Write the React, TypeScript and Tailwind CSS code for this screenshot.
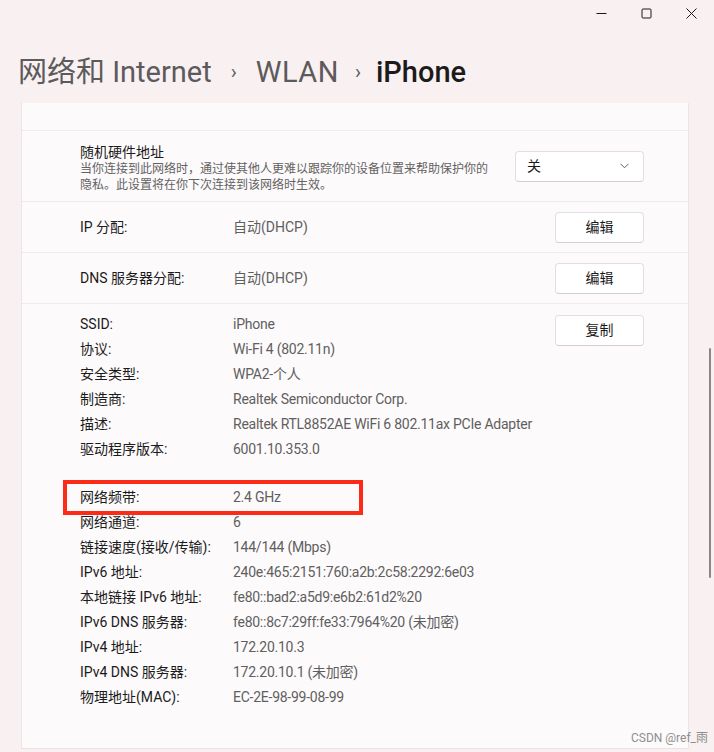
import React from "react";

const font = { fontFamily: 'Roboto, "Noto Sans CJK SC", sans-serif' };

type Info = { label: string; value: string };

const wifiInfo: Info[] = [
  { label: "SSID:", value: "iPhone" },
  { label: "协议:", value: "Wi-Fi 4 (802.11n)" },
  { label: "安全类型:", value: "WPA2-个人" },
  { label: "制造商:", value: "Realtek Semiconductor Corp." },
  { label: "描述:", value: "Realtek RTL8852AE WiFi 6 802.11ax PCIe Adapter" },
  { label: "驱动程序版本:", value: "6001.10.353.0" },
];

const netInfo: Info[] = [
  { label: "网络频带:", value: "2.4 GHz" },
  { label: "网络通道:", value: "6" },
  { label: "链接速度(接收/传输):", value: "144/144 (Mbps)" },
  { label: "IPv6 地址:", value: "240e:465:2151:760:a2b:2c58:2292:6e03" },
  { label: "本地链接 IPv6 地址:", value: "fe80::bad2:a5d9:e6b2:61d2%20" },
  { label: "IPv6 DNS 服务器:", value: "fe80::8c7:29ff:fe33:7964%20 (未加密)" },
  { label: "IPv4 地址:", value: "172.20.10.3" },
  { label: "IPv4 DNS 服务器:", value: "172.20.10.1 (未加密)" },
  { label: "物理地址(MAC):", value: "EC-2E-98-99-08-99" },
];

const Button = ({ text }: { text: string }) => (
  <button className="w-[89px] h-[31px] rounded-[4px] bg-white border border-[#e3dfe0] border-b-[#d4cfd0] text-[14px] text-[#1b1b1b] shrink-0">
    {text}
  </button>
);

const InfoRow = ({ item, marked }: { item: Info; marked?: boolean }) => (
  <div className="relative flex h-[25px] items-center text-[14px]">
    <span className="w-[153px] text-[#1b1b1b] whitespace-nowrap">{item.label}</span>
    <span className="text-[#5f5f5f] whitespace-nowrap tracking-[-0.25px]">{item.value}</span>
    {marked && (
      <div className="absolute left-[-17px] top-[-5px] w-[300px] h-[35px] border-[4px] border-[#fb2b17]" />
    )}
  </div>
);

const App = (): JSX.Element => {
  return (
    <div
      className="relative w-[714px] h-[752px] overflow-hidden bg-[#f9f0f1] flex flex-col"
      style={font}
    >
      {/* title bar */}
      <div className="flex justify-end items-center h-[26px] pr-[17px] gap-[34px] text-[#1b1b1b]">
        <svg width="11" height="11" viewBox="0 0 11 11">
          <path d="M0.5 5.5h10" stroke="#1b1b1b" strokeWidth="1" />
        </svg>
        <svg width="11" height="11" viewBox="0 0 11 11">
          <rect x="1" y="1" width="9" height="9" rx="1" fill="none" stroke="#1b1b1b" strokeWidth="1" />
        </svg>
        <svg width="11" height="11" viewBox="0 0 11 11">
          <path d="M0.5 0.5l10 10M10.5 0.5l-10 10" stroke="#1b1b1b" strokeWidth="1" />
        </svg>
      </div>

      {/* breadcrumb */}
      <div className="flex items-center h-[40px] mt-[26px] pl-[18px] text-[29px] leading-none whitespace-nowrap">
        <span className="text-[#5c5a5b]">网络和 Internet</span>
        <span className="text-[#5c5a5b] text-[20px] mx-[19px]">›</span>
        <span className="text-[#5c5a5b] tracking-[0.5px]">WLAN</span>
        <span className="text-[#5c5a5b] text-[20px] ml-[16px] mr-[15px]">›</span>
        <span className="text-[#1b1b1b] font-medium">iPhone</span>
      </div>

      {/* settings card */}
      <div className="ml-[21px] mt-[11px] w-[668px] bg-[#fdfafb] border-x border-[#ece4e6] flex flex-col">
        <div className="h-[28px] border-b border-[#f3e9eb]" />

        <div className="flex items-center h-[71px] pl-[58px] pr-[44px] border-b border-[#f3e9eb]">
          <div className="flex-1 pt-[4px]">
            <div className="text-[14px] text-[#1b1b1b] leading-[18px]">随机硬件地址</div>
            <div className="text-[12px] text-[#626262] leading-[16px] w-[410px]">
              当你连接到此网络时，通过使其他人更难以跟踪你的设备位置来帮助保护你的隐私。此设置将在你下次连接到该网络时生效。
            </div>
          </div>
          <div className="flex items-center justify-between w-[129px] h-[31px] rounded-[4px] bg-white border border-[#e3dfe0] border-b-[#d4cfd0] pl-[11px] pr-[14px] shrink-0">
            <span className="text-[14px] text-[#1b1b1b]">关</span>
            <svg width="9" height="6" viewBox="0 0 9 6">
              <path d="M0.5 0.8L4.5 4.8L8.5 0.8" fill="none" stroke="#5f5f5f" strokeWidth="1" />
            </svg>
          </div>
        </div>

        <div className="flex items-center h-[51px] pl-[58px] pr-[44px] border-b border-[#f3e9eb] text-[14px]">
          <span className="w-[153px] text-[#1b1b1b]">IP 分配:</span>
          <span className="flex-1 text-[#5f5f5f]">自动(DHCP)</span>
          <Button text="编辑" />
        </div>

        <div className="flex items-center h-[51px] pl-[58px] pr-[44px] border-b border-[#f3e9eb] text-[14px]">
          <span className="w-[153px] text-[#1b1b1b]">DNS 服务器分配:</span>
          <span className="flex-1 text-[#5f5f5f]">自动(DHCP)</span>
          <Button text="编辑" />
        </div>

        <div className="flex pl-[58px] pr-[44px] pt-[8px] h-[445px] border-b border-[#e9e1e3]">
          <div className="flex-1 flex flex-col">
            {wifiInfo.map((item) => (
              <InfoRow key={item.label} item={item} />
            ))}
            <div className="mt-[23px]" />
            {netInfo.map((item, i) => (
              <InfoRow key={item.label} item={item} marked={i === 0} />
            ))}
          </div>
          <div className="pt-[3px]">
            <Button text="复制" />
          </div>
        </div>
      </div>

      {/* scrollbar */}
      <div className="absolute left-[709px] top-[348px] w-[2px] h-[230px] rounded-full bg-[#8c8687]" />

      {/* watermark */}
      <div className="absolute right-[6px] top-[729px] text-[12px] text-[#8e8e8e]">CSDN @ref_雨</div>
    </div>
  );
};

export default App;
